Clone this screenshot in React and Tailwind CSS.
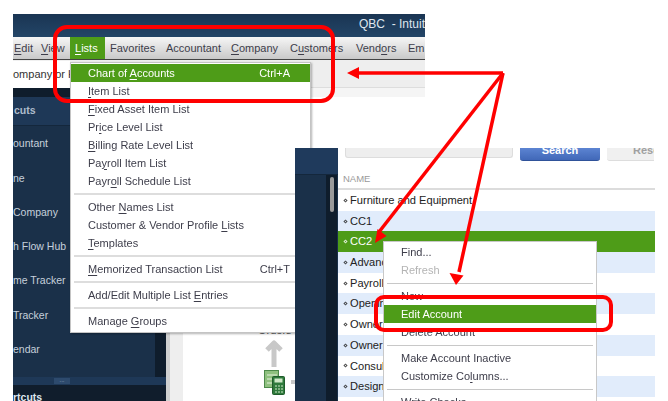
const Mn = ({ t, u }) => {
  // underline the mnemonic letter at index u
  if (u === undefined) return <>{t}</>;
  return (
    <>
      {t.slice(0, u)}
      <span className="underline underline-offset-2">{t[u]}</span>
      {t.slice(u + 1)}
    </>
  );
};

const topMenu = [
  { t: "Edit", u: 0, w: "w-[28px] pl-[1px]" },
  { t: "View", u: 0, w: "w-[29px] pl-[0px]" },
];
const moreMenu = [
  { t: "Favorites", w: "w-[56px]" },
  { t: "Accountant", w: "w-[65px]" },
  { t: "Company", u: 0, w: "w-[59px]" },
  { t: "Customers", u: 1, w: "w-[66px]" },
  { t: "Vendors", u: 4, w: "w-[52px]" },
  { t: "Em", w: "w-[20px]" },
];

const listsMenu = [
  [
    { t: "Chart of Accounts", u: 9, key: "Ctrl+A", active: true },
    { t: "Item List", u: 0 },
    { t: "Fixed Asset Item List", u: 0 },
    { t: "Price Level List", u: 2 },
    { t: "Billing Rate Level List", u: 0 },
    { t: "Payroll Item List", u: 2 },
    { t: "Payroll Schedule List", u: 4 },
  ],
  [
    { t: "Other Names List", u: 6 },
    { t: "Customer & Vendor Profile Lists", u: 26 },
    { t: "Templates", u: 0 },
  ],
  [{ t: "Memorized Transaction List", u: 0, key: "Ctrl+T" }],
  [{ t: "Add/Edit Multiple List Entries", u: 23 }],
  [{ t: "Manage Groups", u: 7 }],
];

const sideRows = ["ountant", "ne", "Company", "h Flow Hub", "me Tracker", "Tracker", "endar"];

const accounts = [
  "Furniture and Equipment",
  "CC1",
  "CC2",
  "Advance",
  "Payroll",
  "Opening",
  "Owner",
  "Owner",
  "Consult",
  "Design",
  "",
];

const ctxMenu = [
  [
    { t: "Find..." },
    { t: "Refresh", off: true },
  ],
  [
    { t: "New" },
    { t: "Edit Account", active: true },
    { t: "Delete Account" },
  ],
  [
    { t: "Make Account Inactive" },
    { t: "Customize Columns...", u: 12 },
  ],
  [{ t: "Write Checks" }],
];

const ListsDropdown = () => (
  <div className="absolute left-[57px] top-[48px] w-[241px] h-[271px] bg-white border border-[#c4c4c4] shadow-[1px_1px_2px_rgba(0,0,0,0.3)] pt-[1px] text-[11px] text-[#3d3d4a] z-10">
    {listsMenu.map((group, i) => (
      <div key={i} className={i > 0 ? "border-t-2 border-[#dddddd] mt-[3px] pt-[3px] mx-[3px]" : ""}>
        {group.map((it) => (
          <div
            key={it.t}
            className={`flex justify-between items-center h-[18px] pr-[20px] ${i > 0 ? "pl-[14px] -mr-[3px]" : "pl-[17px]"} ${it.active ? "bg-[#4e9c18] text-white" : ""}`}
          >
            <span><Mn t={it.t} u={it.u} /></span>
            {it.key && <span>{it.key}</span>}
          </div>
        ))}
      </div>
    ))}
  </div>
);

const ContextMenu = () => (
  <div className="absolute left-[45px] top-[93px] w-[214px] h-[170px] bg-white border border-[#c8c8c8] pt-[1px] text-[11px] text-[#3d3d4a] overflow-hidden">
    {ctxMenu.map((group, i) => (
      <div key={i} className={i > 0 ? "border-t border-[#c8c8c8] mt-[4px] pt-[3px] mx-[3px]" : ""}>
        {group.map((it) => (
          <div
            key={it.t}
            className={`h-[18px] flex items-center pl-[17px] ${i > 0 ? "-mx-[3px]" : ""} ${it.active ? "bg-[#4e9c18] text-white" : ""} ${it.off ? "text-[#b4b4b4]" : ""}`}
          >
            <Mn t={it.t} u={it.u} />
          </div>
        ))}
      </div>
    ))}
  </div>
);

const FlowIcon = () => (
  <svg width="38" height="56" viewBox="0 0 38 56" className="block">
    <path d="M10 27V3M3 10l7-7 7 7" fill="none" stroke="#c8c8c8" strokeWidth="5" strokeLinejoin="round" />
    <rect x="0.500" y="30.500" width="14" height="17" fill="#8fc07f" stroke="#4d8a4a" />
    <path d="M3 35h10M3 39h10M3 43h10" stroke="#e5f2df" />
    <rect x="8.500" y="36.500" width="12" height="18" rx="1" fill="#2f7a3c" stroke="#1f5c2b" />
    <rect x="10.500" y="38.500" width="8" height="4" fill="#cfe8c8" />
    <path d="M11 46h8M11 49h8M11 52h8" stroke="#cfe8c8" strokeDasharray="2 1" />
    <path d="M27 42h11" stroke="#c8c8c8" strokeWidth="4" />
  </svg>
);

const Annotations = () => (
  <svg width="668" height="401" viewBox="0 0 668 401" className="absolute left-0 top-0 z-20">
    <rect x="55" y="27" width="278" height="74" rx="12" fill="none" stroke="#ff0000" strokeWidth="4" />
    <rect x="376" y="297" width="235" height="33" rx="8" fill="none" stroke="#ff0000" strokeWidth="4" />
    <g stroke="#ff0000" strokeWidth="3.500" fill="none">
      <path d="M503 73H356" />
      <path d="M503 73L379 232" />
      <path d="M503 73L459 272" />
    </g>
    <path d="M347 73l12-6v12z" fill="#ff0000" />
    <path d="M375 243l2.500-14 9 7z" fill="#ff0000" />
    <path d="M456 285l-6.500-12 14 2.500z" fill="#ff0000" />
  </svg>
);

export default function App() {
  return (
    <div className="relative w-[668px] h-[401px] overflow-hidden bg-white font-['Liberation_Sans',Arial,sans-serif]">
      {/* back window, cropped to an L shape */}
      <div className="absolute left-[13px] top-[14px] w-[412px] h-[387px] blur-[0.3px]">
        <div className="h-[23px] bg-gradient-to-b from-[#1a3553] to-[#234567] text-[#dfe6ee] text-[12px] leading-[21px] pl-[346px] whitespace-pre overflow-hidden">
          QBC  - Intuit
        </div>
        <div className="h-[23px] flex items-stretch bg-gradient-to-b from-[#f6f6f6] to-[#c9c9c9] border-b border-[#444] text-[11px] text-[#3d3d4a] overflow-hidden whitespace-nowrap">
          {topMenu.map((m) => (
            <div key={m.t} className={`${m.w} shrink-0 flex items-center`}><span><Mn t={m.t} u={m.u} /></span></div>
          ))}
          <div className="w-[35px] shrink-0 bg-[#4e9c18] text-white flex items-center pl-[5px] mr-[5px]"><span><Mn t="Lists" u={0} /></span></div>
          {moreMenu.map((m) => (
            <div key={m.t} className={`${m.w} shrink-0 flex items-center`}><span><Mn t={m.t} u={m.u} /></span></div>
          ))}
        </div>
        <div className="h-[37px] flex bg-[#f0f0f0]">
          <div className="w-[57px] h-[27px] bg-white mt-[1px] text-[11px] leading-[27px] text-[#333] whitespace-nowrap overflow-hidden">ompany or H</div>
          <div className="flex-1 flex flex-col">
            <div className="h-[27px] bg-[#eeeeee]"></div>
            <div className="flex-1 bg-[#f5f5f5] border-t border-[#dddddd]"></div>
          </div>
        </div>
        <div className="w-[282px] h-[304px] flex">
          <div className="w-[153px] h-full flex flex-col bg-[#1a3049] text-[#c6d0dc] text-[10.5px]">
            <div className="-mt-[9px] h-[9px] w-[57px] bg-[#0f1d2c]"></div>
            <div className="h-[29px] bg-[#1e3857] border-b border-[#14273c] font-bold flex items-center pl-[1px] text-[#aebccb]">
              cuts
            </div>
            <div className="flex flex-1 min-h-0">
              <div className="w-[142px] pt-[1px]">
                {sideRows.map((t) => (
                  <div key={t} className="h-[34.3px] flex items-center whitespace-nowrap">{t}</div>
                ))}
              </div>
              <div className="flex-1 bg-[#0f1d2c]"></div>
            </div>
            <div className="h-[8px] bg-[#1e3857] flex justify-center items-center pr-[55px]">
              <div className="w-[16px] h-[6px] bg-[#2d4a6d] text-[6px] leading-[4px] text-center text-[#9fb3c8]">...</div>
            </div>
            <div className="h-[16px] bg-[#101d2c] font-bold text-[#dfe6ee] leading-[24px] overflow-hidden">rtcuts</div>
          </div>
          <div className="w-[4px] bg-[#d0d0d0]"></div>
          <div className="w-[13px] bg-[#eeeeee]"></div>
          <div className="flex-1 bg-white overflow-hidden pl-[81px]">
            <div className="text-[11px] text-[#555] leading-[12px] pt-[227px] -ml-[6px]">Orders</div>
            <div className="mt-[4px] w-[38px]"><FlowIcon /></div>
          </div>
        </div>
        <ListsDropdown />
      </div>

      {/* front window */}
      <div className="absolute left-[295px] top-[148px] w-[360px] h-[253px] flex z-[15] blur-[0.3px]">
        <div className="w-[43px] h-full flex flex-col bg-[#1a3049]">
          <div className="h-[27px] bg-[#1f3a5c] border-b border-[#14273c]"></div>
          <div className="flex-1 flex justify-end">
            <div className="w-[11px] mr-[1px] bg-[#0f1d2c] flex justify-center">
              <div className="w-[4px] h-[35px] mt-[2px] rounded-full bg-[#9a9a9a]"></div>
            </div>
          </div>
        </div>
        <div className="flex-1 bg-white relative">
          <div className="h-[27px] flex items-start pl-[7px] gap-[7px]">
            <div className="w-[168px] h-[10px] bg-[#eeeeee] border border-t-0 border-[#dddddd] rounded-b-[3px]"></div>
            <div className="w-[80px] h-[13px] bg-gradient-to-b from-[#5c84d2] to-[#4168b8] border-b border-[#2f5299] rounded-b-[3px] text-white font-bold text-[11px] text-center leading-[5px] overflow-hidden">Search</div>
            <div className="w-[47px] h-[13px] bg-[#f0f0f0] border-b border-[#dddddd] rounded-bl-[3px] text-[#a0a0a0] font-bold text-[11px] leading-[5px] pl-[26px] overflow-hidden whitespace-nowrap">Reset</div>
          </div>
          <div className="h-[9px] flex items-center pl-[5px] text-[9.5px] text-[#9a9a9a]">NAME</div>
          <div className="h-[2px] mt-[4px] bg-[#dcdcdc]"></div>
          <div className="overflow-hidden">
            {accounts.map((a, i) => (
              <div
                key={i}
                className={`h-[20.7px] flex items-center pl-[6px] gap-[3px] text-[11.1px] whitespace-nowrap ${a === "CC2" ? "bg-[#4e9c18] text-white" : i % 2 === 1 ? "bg-[#e1ecfb] text-[#222]" : "bg-white text-[#222]"}`}
              >
                {a && <span className="w-[3px] h-[3px] rotate-45 border border-current opacity-80"></span>}
                <span>{a}</span>
              </div>
            ))}
          </div>
          <div className="absolute left-0 top-0">
            <ContextMenu />
          </div>
        </div>
      </div>

      <Annotations />
    </div>
  );
}
